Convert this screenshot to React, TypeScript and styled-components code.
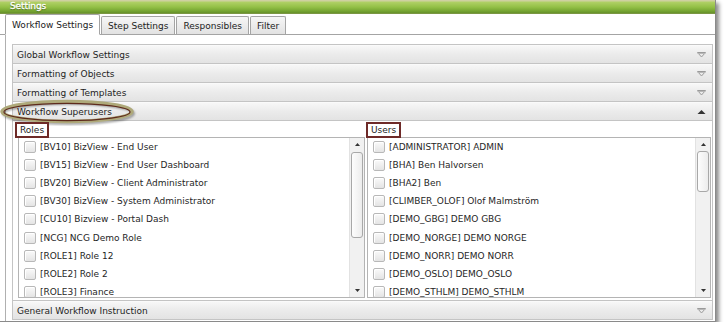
import React from "react";
import styled, { createGlobalStyle } from "styled-components";

const Global = createGlobalStyle`
  html, body { margin: 0; padding: 0; background: #ffffff; }
  body { font-family: "DejaVu Sans", Verdana, sans-serif; font-size: 9px; color: #222; }
  * { box-sizing: border-box; }
`;

const Window = styled.div`
  position: relative;
  width: 716px;
  height: 322px;
  background: #fff;
  border-right: 1px solid #8a8a8a;
  border-bottom: 1px solid #8a8a8a;
  box-shadow: 3px 3px 4px rgba(0, 0, 0, 0.45);
  display: flex;
  flex-direction: column;
`;

const TitleBar = styled.div`
  height: 14px;
  flex: none;
  background: linear-gradient(#cfd0a0 0px, #cfd0a0 1px, #b0d066 2px, #94c046 7px, #76a532 11px, #66922a 13px, #8e9a5a 14px);
  color: #ffffff;
  padding-left: 10px;
  line-height: 13px;
  font-size: 9px;
  letter-spacing: -0.1px;
  -webkit-text-stroke: 0.3px #ffffff;
  text-shadow: 0 1px 1px rgba(50, 70, 15, 0.8);
`;

const TabStrip = styled.div`
  height: 21px;
  flex: none;
  display: flex;
  align-items: flex-end;
  padding-left: 5px;
  border-bottom: 1px solid #a4a4a4;
`;

const Tab = styled.div<{ $active?: boolean }>`
  height: ${(p) => (p.$active ? "21px" : "18px")};
  margin-bottom: ${(p) => (p.$active ? "-1px" : "0")};
  padding: 0 6px;
  margin-right: 1px;
  display: flex;
  align-items: center;
  border: 1px solid #a4a4a4;
  border-bottom: ${(p) => (p.$active ? "1px solid #fff" : "none")};
  border-radius: 2px 2px 0 0;
  background: ${(p) => (p.$active ? "#fff" : "linear-gradient(#f6f6f6, #e2e2e2)")};
  color: #222;
  font-size: 9px;
`;

const Panel = styled.div`
  flex: 1;
  margin-left: 5px;
  border-left: 1px solid #b0b0b0;
  padding: 9px 2px 0 6px;
`;

const Accordion = styled.div`
  border: 1px solid #c4c4c4;
  border-bottom: none;
`;

const Header = styled.div`
  height: 19px;
  display: flex;
  align-items: center;
  justify-content: space-between;
  padding: 0 6px 0 4px;
  background: linear-gradient(#f7f7f7, #ebebeb 50%, #e3e3e3);
  border-bottom: 1px solid #c4c4c4;
  border-top: 1px solid #fafafa;
  color: #1e1e1e;
  font-size: 9px;
`;

const Arrow = ({ open }: { open?: boolean }) =>
  open ? (
    <svg width="9" height="6" viewBox="0 0 9 6">
      <polygon points="0.5,5 4.5,1 8.5,5" fill="#333" />
    </svg>
  ) : (
    <svg width="9" height="6" viewBox="0 0 9 6">
      <polygon points="0.5,0.5 8.5,0.5 4.5,5" fill="none" stroke="#9a9a9a" strokeWidth="1" />
      <line x1="0.5" y1="1.5" x2="8.5" y2="1.5" stroke="#b8b8b8" />
    </svg>
  );

const SectionBody = styled.div`
  height: 180px;
  display: grid;
  grid-template-columns: 350px 1fr;
  column-gap: 1px;
  padding: 1px 1px 0 2px;
  border-bottom: 1px solid #c4c4c4;
`;

const Column = styled.div`
  display: flex;
  flex-direction: column;
`;

const LabelBox = styled.div`
  align-self: flex-start;
  height: 16px;
  padding: 0 3px;
  line-height: 12px;
  border: 2px solid #6e2a28;
  color: #1e1e1e;
  font-size: 9px;
  background: #fff;
  position: relative;
  z-index: 1;
`;

const ListBox = styled.div<{ $indent: number }>`
  margin-left: ${(p) => p.$indent}px;
  margin-top: -1px;
  height: 161px;
  border: 1px solid #b4b4b4;
  display: flex;
  background: #fff;
`;

const Items = styled.div`
  flex: 1;
  overflow: hidden;
  padding: 0 0 0 5px;
`;

const Row = styled.div`
  height: 18.1px;
  display: flex;
  align-items: center;
  gap: 4px;
  color: #262626;
  white-space: nowrap;
`;

const Check = styled.span`
  width: 12px;
  height: 12px;
  border: 1px solid #b8b8b8;
  border-radius: 2px;
  background: linear-gradient(#fafafa, #e4e4e4);
  box-shadow: inset 1px 1px 0 #fff;
  flex: none;
`;

const Scroll = styled.div`
  width: 15px;
  flex: none;
  background: #f1f1f1;
  border-left: 1px solid #e2e2e2;
  display: flex;
  flex-direction: column;
  position: relative;
`;

const ScrollBtn = styled.div`
  height: 13px;
  flex: none;
  display: flex;
  align-items: center;
  justify-content: center;
`;

const Track = styled.div`
  flex: 1;
  position: relative;
`;

const Thumb = styled.div`
  position: absolute;
  left: 1px;
  right: 1px;
  border: 1px solid #a8a8a8;
  border-radius: 3px;
  background: linear-gradient(90deg, #fdfdfd, #ececec);
`;

const ScrollBar = ({ top, height }: { top: number; height: number }) => (
  <Scroll>
    <ScrollBtn>
      <svg width="5" height="3" viewBox="0 0 5 3">
        <polygon points="0,3 2.5,0 5,3" fill="#333" />
      </svg>
    </ScrollBtn>
    <Track>
      <Thumb style={{ top, height }} />
    </Track>
    <ScrollBtn>
      <svg width="5" height="3" viewBox="0 0 5 3">
        <polygon points="0,0 5,0 2.5,3" fill="#333" />
      </svg>
    </ScrollBtn>
  </Scroll>
);

const Ellipse = styled.svg`
  position: absolute;
  left: 0px;
  top: 98px;
  pointer-events: none;
`;

const roles = [
  "[BV10] BizView - End User",
  "[BV15] BizView - End User Dashboard",
  "[BV20] BizView - Client Administrator",
  "[BV30] BizView - System Administrator",
  "[CU10] Bizview - Portal Dash",
  "[NCG] NCG Demo Role",
  "[ROLE1] Role 12",
  "[ROLE2] Role 2",
  "[ROLE3] Finance",
];

const users = [
  "[ADMINISTRATOR] ADMIN",
  "[BHA] Ben Halvorsen",
  "[BHA2] Ben",
  "[CLIMBER_OLOF] Olof Malmström",
  "[DEMO_GBG] DEMO GBG",
  "[DEMO_NORGE] DEMO NORGE",
  "[DEMO_NORR] DEMO NORR",
  "[DEMO_OSLO] DEMO_OSLO",
  "[DEMO_STHLM] DEMO_STHLM",
];

export default function App() {
  return (
    <>
      <Global />
      <Window>
        <TitleBar>Settings</TitleBar>
        <TabStrip>
          <Tab $active>Workflow Settings</Tab>
          <Tab>Step Settings</Tab>
          <Tab>Responsibles</Tab>
          <Tab>Filter</Tab>
        </TabStrip>
        <Panel>
          <Accordion>
            <Header>
              Global Workflow Settings
              <Arrow />
            </Header>
            <Header>
              Formatting of Objects
              <Arrow />
            </Header>
            <Header>
              Formatting of Templates
              <Arrow />
            </Header>
            <Header>
              Workflow Superusers
              <Arrow open />
            </Header>
            <SectionBody>
              <Column>
                <LabelBox>Roles</LabelBox>
                <ListBox $indent={3}>
                  <Items>
                    {roles.map((r) => (
                      <Row key={r}>
                        <Check />
                        {r}
                      </Row>
                    ))}
                  </Items>
                  <ScrollBar top={1} height={86} />
                </ListBox>
              </Column>
              <Column>
                <LabelBox>Users</LabelBox>
                <ListBox $indent={1}>
                  <Items>
                    {users.map((u) => (
                      <Row key={u}>
                        <Check />
                        {u}
                      </Row>
                    ))}
                  </Items>
                  <ScrollBar top={0} height={41} />
                </ListBox>
              </Column>
            </SectionBody>
            <Header>
              General Workflow Instruction
              <Arrow />
            </Header>
          </Accordion>
        </Panel>
        <Ellipse width="140" height="28" viewBox="0 0 140 28">
          <defs>
            <filter id="sh" x="-10%" y="-30%" width="130%" height="170%">
              <feGaussianBlur stdDeviation="1" />
            </filter>
          </defs>
          <ellipse cx="68.5" cy="15.5" rx="65" ry="10" fill="none" stroke="rgba(0,0,0,0.4)" strokeWidth="2.5" filter="url(#sh)" />
          <ellipse cx="67" cy="13.5" rx="65" ry="10" fill="none" stroke="#aea97a" strokeWidth="3.5" />
          <ellipse cx="67" cy="14" rx="63" ry="8.6" fill="none" stroke="#5e2a1c" strokeWidth="1.2" />
        </Ellipse>
      </Window>
    </>
  );
}
